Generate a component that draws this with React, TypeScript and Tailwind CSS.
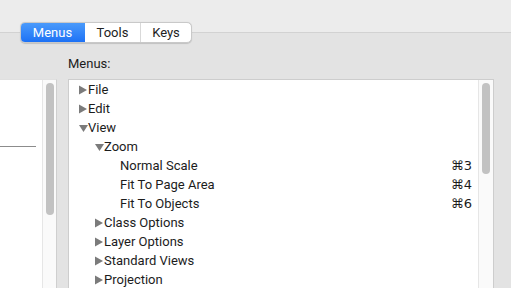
import React from "react";

const Tri = ({ down }: { down?: boolean }) =>
  down ? (
    <svg width="9" height="8" viewBox="0 0 9 8" className="shrink-0">
      <polygon points="0,1 9,1 4.5,8" fill="#7b7b7b" />
    </svg>
  ) : (
    <svg width="8" height="10" viewBox="0 0 8 10" className="shrink-0">
      <polygon points="0,0.5 8,5 0,9.5" fill="#7b7b7b" />
    </svg>
  );

type Row = { label: string; level: number; kind: "closed" | "open" | "leaf"; key?: string };

const rows: Row[] = [
  { label: "File", level: 0, kind: "closed" },
  { label: "Edit", level: 0, kind: "closed" },
  { label: "View", level: 0, kind: "open" },
  { label: "Zoom", level: 1, kind: "open" },
  { label: "Normal Scale", level: 2, kind: "leaf", key: "⌘3" },
  { label: "Fit To Page Area", level: 2, kind: "leaf", key: "⌘4" },
  { label: "Fit To Objects", level: 2, kind: "leaf", key: "⌘6" },
  { label: "Class Options", level: 1, kind: "closed" },
  { label: "Layer Options", level: 1, kind: "closed" },
  { label: "Standard Views", level: 1, kind: "closed" },
  { label: "Projection", level: 1, kind: "closed" },
];

const padFor = (r: Row) => {
  if (r.kind === "leaf") return "pl-[51px]";
  if (r.level === 0) return "pl-[10px]";
  return "pl-[26px]";
};

export default function App() {
  return (
    <div
      className="relative w-[511px] h-[288px] overflow-hidden bg-[#e3e3e3] text-[13px] text-[#1c1c1c]"
      style={{ fontFamily: "Roboto, 'Liberation Sans', 'DejaVu Sans', sans-serif" }}
    >
      <div className="h-[33px] bg-[#ececec] border-b border-[#d2d2d2]" />

      <div className="absolute left-[20px] top-[22px] flex h-[21px] rounded-[5px] border border-[#c9c9c9] bg-white shadow-[0_0.5px_1px_rgba(0,0,0,0.15)] overflow-hidden">
        <div className="w-[65px] flex items-center justify-center bg-gradient-to-b from-[#4c9cfb] to-[#1a6ff5] text-white -my-px -ml-px">
          Menus
        </div>
        <div className="w-[56px] flex items-center justify-center border-r border-[#d9d9d9] text-[#222]">
          Tools
        </div>
        <div className="w-[50px] flex items-center justify-center text-[#222]">Keys</div>
      </div>

      <div className="pl-[68px] pt-[23px] h-[46px] leading-[16px]">Menus:</div>

      <div className="flex items-start">
        <div className="w-[57px] h-[220px] flex bg-white border-r border-[#cfcfcf] border-t border-t-[#e0e0e0]">
          <div className="flex-1 pt-[66px]">
            <div className="w-[36px] h-px bg-[#8c8c8c]" />
          </div>
          <div className="w-[14px] bg-[#fafafa] border-l border-[#e6e6e6] pt-[3px] flex justify-center">
            <div className="w-[8px] h-[132px] rounded-full bg-[#c2c2c2]" />
          </div>
        </div>

        <div className="ml-[11px] w-[426px] h-[220px] flex bg-white border border-[#cdcdcd] border-b-0">
          <div className="flex-1 flex flex-col">
            {rows.map((r) => (
              <div key={r.label} className={`h-[19px] flex items-center pr-[6px] ${padFor(r)}`}>
                {r.kind !== "leaf" && (
                  <span className="w-[9px] flex items-center">
                    <Tri down={r.kind === "open"} />
                  </span>
                )}
                <span className="leading-none">{r.label}</span>
                {r.key && (
                  <span className="ml-auto leading-none" style={{ fontFamily: "'DejaVu Sans', sans-serif" }}>
                    {r.key}
                  </span>
                )}
              </div>
            ))}
          </div>
          <div className="w-[15px] bg-[#fafafa] border-l border-[#e6e6e6] pt-[3px] flex justify-center">
            <div className="w-[8px] h-[91px] rounded-full bg-[#c2c2c2]" />
          </div>
        </div>
      </div>
    </div>
  );
}
